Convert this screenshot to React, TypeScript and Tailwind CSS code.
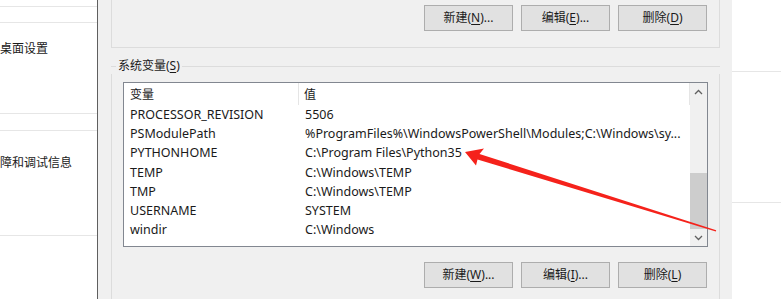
import type { ReactNode } from 'react'

const FONT = { fontFamily: '"Segoe UI", "Noto Sans", "Noto Sans CJK SC", sans-serif' }

type Row = { name: string; value: string }

const ROWS: Row[] = [
  { name: 'PROCESSOR_REVISION', value: '5506' },
  { name: 'PSModulePath', value: '%ProgramFiles%\\WindowsPowerShell\\Modules;C:\\Windows\\sy...' },
  { name: 'PYTHONHOME', value: 'C:\\Program Files\\Python35' },
  { name: 'TEMP', value: 'C:\\Windows\\TEMP' },
  { name: 'TMP', value: 'C:\\Windows\\TEMP' },
  { name: 'USERNAME', value: 'SYSTEM' },
  { name: 'windir', value: 'C:\\Windows' },
]

function WinButton({ label, hotkey, dots }: { label: string; hotkey: string; dots?: boolean }) {
  return (
    <button
      type="button"
      className="flex h-[26px] w-[89px] items-center justify-center border border-[#adadad] bg-[#e1e1e1] text-[12px] text-[#1a1a1a]"
    >
      {label}(<span className="underline underline-offset-2">{hotkey}</span>){dots ? '...' : ''}
    </button>
  )
}

function ButtonRow({ children }: { children: ReactNode }) {
  return <div className="flex justify-end gap-[8px] pr-[12px]">{children}</div>
}

function Chevron({ up }: { up?: boolean }) {
  return (
    <svg width="9" height="6" viewBox="0 0 9 6">
      <polyline
        points={up ? '1,5 4.5,1.5 8,5' : '1,1 4.5,4.5 8,1'}
        fill="none"
        stroke="#606060"
        strokeWidth="1.3"
      />
    </svg>
  )
}

function ListView() {
  return (
    <div className="flex h-[165px] w-[585px] border border-[#828790] bg-white text-[12.5px] text-[#1a1a1a]">
      <div className="flex flex-1 flex-col">
        <div className="flex h-[22px] items-center">
          <div className="h-full w-[175px] border-r border-[#e5e5e5] pl-[6px] text-[12px] leading-[23px]">变量</div>
          <div className="h-full flex-1 border-r border-[#e5e5e5] pl-[5px] text-[12px] leading-[23px]">值</div>
        </div>
        {ROWS.map((r) => (
          <div key={r.name} className="flex h-[19.2px] items-center leading-[19px]">
            <div className="w-[175px] pl-[6px]">{r.name}</div>
            <div className="flex-1 whitespace-nowrap pl-[6px]">{r.value}</div>
          </div>
        ))}
      </div>
      <div className="flex w-[17px] flex-col bg-[#f0f0f0]">
        <div className="flex h-[17px] items-center justify-center">
          <Chevron up />
        </div>
        <div className="h-[73px]" />
        <div className="h-[56px] bg-[#cdcdcd]" />
        <div className="flex h-[17px] items-center justify-center">
          <Chevron />
        </div>
      </div>
    </div>
  )
}

export default function App() {
  return (
    <div className="relative flex h-[299px] w-[781px] overflow-hidden bg-white" style={FONT}>
      {/* left settings pane, cut off */}
      <div className="flex w-[98px] shrink-0 flex-col border-r border-[#5f5f5f] bg-white text-[12px] text-[#1a1a1a]">
        <div className="mt-[6px] h-[17px] border-y border-[#e6e6e6]" />
        <div className="mt-[17px] whitespace-nowrap">桌面设置</div>
        <div className="mt-[55px] h-[18px] border-y border-[#e6e6e6]" />
        <div className="mt-[23px] whitespace-nowrap">障和调试信息</div>
        <div className="mt-[63px] border-t border-[#e6e6e6]" />
      </div>

      {/* dialog */}
      <div className="flex w-[634px] shrink-0 flex-col bg-[#f0f0f0] pl-[13px] text-[12px] text-[#1a1a1a]">
        <div className="h-[48px] w-[609px] border-x border-b border-[#dcdcdc] pt-[5px]">
          <ButtonRow>
            <WinButton label="新建" hotkey="N" dots />
            <WinButton label="编辑" hotkey="E" dots />
            <WinButton label="删除" hotkey="D" />
          </ButtonRow>
        </div>

        <div className="mt-[10px] flex w-[609px] items-center">
          <div className="w-[5px] border-t border-[#dcdcdc]" />
          <span className="px-[2px] leading-[16px]">
            系统变量(<span className="underline underline-offset-2">S</span>)
          </span>
          <div className="flex-1 border-t border-[#dcdcdc]" />
        </div>
        <div className="w-[609px] flex-1 border-x border-[#dcdcdc] pl-[11px] pt-[8px]">
          <ListView />
          <div className="mt-[15px]">
            <ButtonRow>
              <WinButton label="新建" hotkey="W" dots />
              <WinButton label="编辑" hotkey="I" dots />
              <WinButton label="删除" hotkey="L" />
            </ButtonRow>
          </div>
        </div>
      </div>

      {/* right pane */}
      <div className="flex flex-1 flex-col bg-white">
        <div className="mt-[71px] h-[132px] border-b border-[#e6e6e6] border-t" />
      </div>

      {/* red annotation arrow */}
      <svg className="pointer-events-none absolute left-0 top-0" width="781" height="299" viewBox="0 0 781 299">
        <polygon
          points="465,152 484,148.5 479.5,154 716.2,230.3 715.8,231.6 477.5,159.5 476,165.5"
          fill="#f5221b"
        />
      </svg>
    </div>
  )
}
